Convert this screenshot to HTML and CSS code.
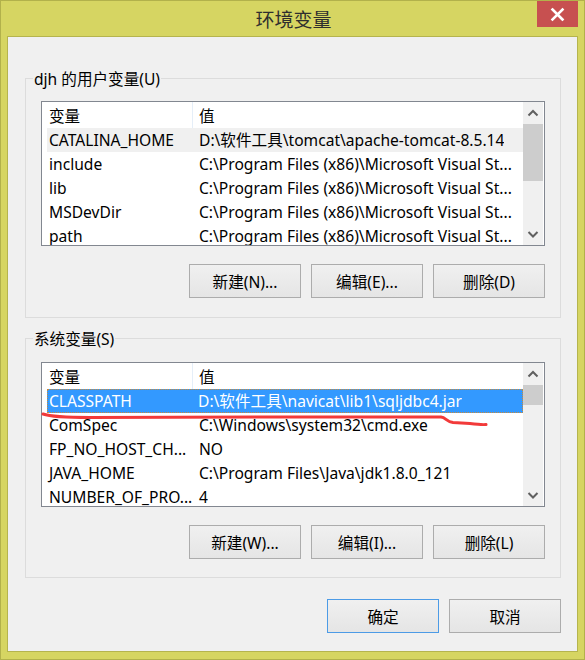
FILE: index.html
```html
<!DOCTYPE html>
<html lang="zh-CN">
<head>
<meta charset="utf-8">
<title>环境变量</title>
<link rel="stylesheet" href="styles.css">
</head>
<body>
<div class="window">
  <div class="titlebar">
    <div class="tb-spacer"></div>
    <div class="title">环境变量</div>
    <div class="tb-right">
      <div class="close">
        <svg width="41" height="27" viewBox="0 0 41 27"><path d="M15.5 8.5 L25.5 18.5 M25.5 8.5 L15.5 18.5" stroke="#ffffff" stroke-width="2.6" stroke-linecap="square"/></svg>
      </div>
    </div>
  </div>
  <div class="client">
    <div class="group group-user">
      <div class="legend">djh 的用户变量(U)</div>
      <div class="list">
        <div class="list-main">
          <div class="header">
            <div class="hcell hname">变量</div>
            <div class="hcell hval">值</div>
          </div>
          <div class="row row-soft"><div class="cname">CATALINA_HOME</div><div class="cval">D:\软件工具\tomcat\apache-tomcat-8.5.14</div></div>
          <div class="row"><div class="cname">include</div><div class="cval">C:\Program Files (x86)\Microsoft Visual St...</div></div>
          <div class="row"><div class="cname">lib</div><div class="cval">C:\Program Files (x86)\Microsoft Visual St...</div></div>
          <div class="row"><div class="cname">MSDevDir</div><div class="cval">C:\Program Files (x86)\Microsoft Visual St...</div></div>
          <div class="row"><div class="cname">path</div><div class="cval">C:\Program Files (x86)\Microsoft Visual St...</div></div>
        </div>
        <div class="scrollbar">
          <div class="arrow"><svg width="20" height="21" viewBox="0 0 20 21"><path d="M5.5 13.5 L10 9 L14.5 13.5" fill="none" stroke="#606060" stroke-width="2"/></svg></div>
          <div class="track"><div class="thumb thumb-user"></div></div>
          <div class="arrow"><svg width="20" height="21" viewBox="0 0 20 21"><path d="M5.5 8 L10 12.5 L14.5 8" fill="none" stroke="#606060" stroke-width="2"/></svg></div>
        </div>
      </div>
      <div class="buttons">
        <div class="btn">新建(N)...</div>
        <div class="btn">编辑(E)...</div>
        <div class="btn">删除(D)</div>
      </div>
    </div>

    <div class="group group-sys">
      <div class="legend">系统变量(S)</div>
      <div class="list">
        <div class="list-main">
          <div class="header">
            <div class="hcell hname">变量</div>
            <div class="hcell hval">值</div>
          </div>
          <div class="row row-selected"><div class="cname">CLASSPATH</div><div class="cval">D:\软件工具\navicat\lib1\sqljdbc4.jar</div></div>
          <div class="row"><div class="cname">ComSpec</div><div class="cval">C:\Windows\system32\cmd.exe</div></div>
          <div class="row"><div class="cname">FP_NO_HOST_CH...</div><div class="cval">NO</div></div>
          <div class="row"><div class="cname">JAVA_HOME</div><div class="cval">C:\Program Files\Java\jdk1.8.0_121</div></div>
          <div class="row"><div class="cname">NUMBER_OF_PRO...</div><div class="cval">4</div></div>
        </div>
        <div class="scrollbar">
          <div class="arrow"><svg width="20" height="21" viewBox="0 0 20 21"><path d="M5.5 13.5 L10 9 L14.5 13.5" fill="none" stroke="#606060" stroke-width="2"/></svg></div>
          <div class="track"><div class="thumb thumb-sys"></div></div>
          <div class="arrow"><svg width="20" height="21" viewBox="0 0 20 21"><path d="M5.5 8 L10 12.5 L14.5 8" fill="none" stroke="#606060" stroke-width="2"/></svg></div>
        </div>
      </div>
      <div class="buttons">
        <div class="btn">新建(W)...</div>
        <div class="btn">编辑(I)...</div>
        <div class="btn">删除(L)</div>
      </div>
    </div>

    <div class="dialog-buttons">
      <div class="btn btn-default">确定</div>
      <div class="btn">取消</div>
    </div>
  </div>
  <svg class="scribble" width="585" height="660" viewBox="0 0 585 660">
    <path d="M43 414 C50 416.5 62 417.5 90 417.5 L300 417 L441 417 C446 417.5 446 421.5 453 422.5 L470 423.5 C478 424.5 482 425 486 424.5" fill="none" stroke="#f23a3a" stroke-width="3" stroke-linecap="round" stroke-linejoin="round"/>
  </svg>
</div>
</body>
</html>
```

FILE: styles.css
```css
html, body {
  margin: 0;
  padding: 0;
}
body {
  width: 585px;
  height: 660px;
  overflow: hidden;
  font-family: "Noto Sans", "Noto Sans CJK SC", sans-serif;
  font-size: 15.6px;
  color: #000;
}
.window {
  position: relative;
  width: 585px;
  height: 660px;
  box-sizing: border-box;
  background: #d6d562;
  border: 1px solid #b2b14b;
  display: flex;
  flex-direction: column;
}
.titlebar {
  height: 35px;
  display: grid;
  grid-template-columns: 1fr auto 1fr;
}
.title {
  font-family: "Noto Sans CJK SC", sans-serif;
  font-size: 19px;
  line-height: 36px;
  color: #2e2e2e;
  padding-left: 2px;
}
.tb-right {
  display: flex;
  justify-content: flex-end;
  align-items: flex-start;
  padding-right: 6px;
}
.close {
  width: 41px;
  height: 26px;
  background: #c75050;
  display: flex;
}
.client {
  flex: 1;
  margin: 0 6px 7px 6px;
  background: #f0f0f0;
  border: 1px solid #b5b44e;
  display: flex;
  flex-direction: column;
}
.group {
  margin: 41px 16px 0 17px;
  height: 240px;
  box-sizing: border-box;
  border: 1px solid #dcdcdc;
  display: flex;
  flex-direction: column;
}
.group-sys {
  margin-top: 20px;
}
.legend {
  width: fit-content;
  height: 20px;
  line-height: 20px;
  margin: -10px 0 0 7px;
  padding: 0 1px;
  background: #f0f0f0;
  color: #000;
}
.list {
  margin: 12px 0 0 15px;
  width: 504px;
  height: 145px;
  box-sizing: border-box;
  border: 1px solid #828790;
  background: #fff;
  display: flex;
}
.group-sys .list {
  margin-top: 13px;
}
.list-main {
  flex: 1;
  overflow: hidden;
}
.header {
  height: 26px;
  display: flex;
  background: #fff;
}
.hcell {
  line-height: 24px;
  padding-top: 2px;
  white-space: nowrap;
}
.hname {
  width: 143px;
  padding-left: 7px;
  border-right: 1px solid #e5eef8;
}
.hval {
  padding-left: 6px;
}
.row {
  height: 24px;
  line-height: 24px;
  margin-left: 5px;
  display: flex;
  white-space: nowrap;
  box-sizing: border-box;
}
.cname {
  width: 144px;
  padding-left: 2px;
  flex: none;
  overflow: hidden;
}
.cval {
  padding-left: 6px;
  overflow: hidden;
}
.row-soft {
  background: #f0f0f0;
}
.row-selected {
  background: #3399ff;
  color: #fff;
  border: 1px dotted #c88a3c;
  line-height: 22px;
}
.row-selected .cname {
  width: 143px;
  padding-left: 1px;
}
.scrollbar {
  width: 20px;
  margin-right: 1px;
  background: #f0f0f0;
  display: flex;
  flex-direction: column;
}
.arrow {
  height: 21px;
  flex: none;
  display: flex;
}
.track {
  flex: 1;
  display: flex;
  flex-direction: column;
}
.thumb {
  background: #cdcdcd;
}
.thumb-user {
  margin-top: 1px;
  height: 57px;
}
.thumb-sys {
  margin-top: 1px;
  height: 20px;
}
.buttons {
  margin: 18px 0 0 163px;
  display: flex;
  gap: 10px;
}
.btn {
  width: 112px;
  height: 34px;
  box-sizing: border-box;
  border: 1px solid #acacac;
  background: linear-gradient(#f0f0f0, #e5e5e5);
  display: flex;
  align-items: center;
  justify-content: center;
  white-space: nowrap;
  color: #000;
}
.dialog-buttons {
  margin: 21px 16px 0 0;
  display: flex;
  justify-content: flex-end;
  gap: 10px;
}
.btn-default {
  border-color: #4c9be6;
}
.scribble {
  position: absolute;
  left: -1px;
  top: -1px;
  pointer-events: none;
}
```
